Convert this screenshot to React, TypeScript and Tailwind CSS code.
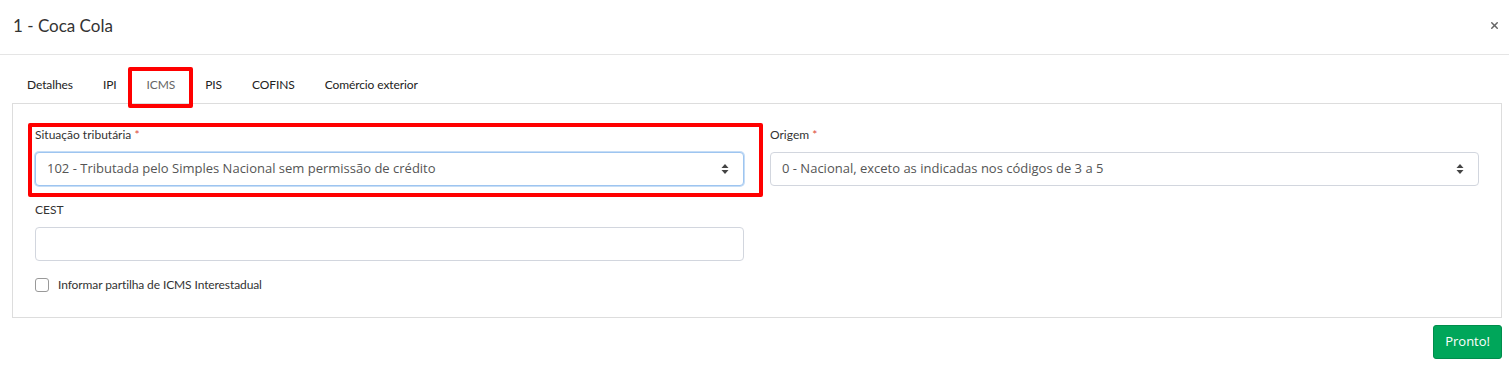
import { X } from 'lucide-react';

const tabs = ['Detalhes', 'IPI', 'ICMS', 'PIS', 'COFINS', 'Comércio exterior'];

function SelectArrows() {
  return (
    <svg width="8" height="12" viewBox="0 0 8 12" className="shrink-0">
      <path d="M4 1 L7.5 5 H0.5 Z" fill="#444" />
      <path d="M4 11 L7.5 7 H0.5 Z" fill="#444" />
    </svg>
  );
}

function FakeSelect({ value, focused }: { value: string; focused?: boolean }) {
  return (
    <div
      className={
        'h-[34px] rounded-[4px] border bg-white flex items-center justify-between pl-[11px] pr-[14px] text-[13px] text-[#555] ' +
        (focused ? 'border-[#9ec5f0] shadow-[0_0_0_1px_#c6ddf6]' : 'border-[#d2d6de]')
      }
      style={{ fontFamily: '"Open Sans", sans-serif' }}
    >
      <span>{value}</span>
      <SelectArrows />
    </div>
  );
}

export default function App() {
  return (
    <div className="w-[1509px] h-[366px] bg-white text-[#333] relative overflow-hidden" style={{ fontFamily: 'Lato, "Noto Sans", sans-serif' }}>
      {/* header */}
      <div className="h-[55px] border-b border-[#e5e5e5] flex items-center justify-between pl-[13px] pr-[9px]">
        <h4 className="text-[17px] leading-none pb-[4px]">1 - Coca Cola</h4>
        <X className="w-[11px] h-[11px] text-[#666] mb-[4px]" strokeWidth={3.2} />
      </div>

      <div className="pl-[12px] pr-[7px] pt-[12px]">
        {/* tabs */}
        <div className="flex h-[36px] relative">
          {tabs.map((t) => (
            <div
              key={t}
              className={'px-[15px] flex items-center text-[12px] tracking-[-0.1px] relative ' + (t === 'ICMS' ? 'text-[#666]' : 'text-[#222]')}
            >
              {t}
              {t === 'ICMS' && (
                <div className="absolute -left-[4px] -right-[3px] top-0 bottom-[-5px] border-[4px] border-[#f00] rounded-[2px]" />
              )}
            </div>
          ))}
        </div>

        {/* panel */}
        <div className="border border-[#ddd] h-[215px] pl-[22px] pt-[22px]">
          <div className="grid grid-cols-[709px_709px] gap-x-[26px]">
            <div className="relative">
              <div className="absolute -left-[7px] -right-[19px] -top-[3px] h-[74px] border-[4px] border-[#f00] rounded-[2px] pointer-events-none" />
              <label className="block text-[12px] h-[18px] leading-[18px] mb-[8px]">
                Situação tributária <span className="text-[#dd4b39]">*</span>
              </label>
              <FakeSelect value="102 - Tributada pelo Simples Nacional sem permissão de crédito" focused />
            </div>
            <div>
              <label className="block text-[12px] h-[18px] leading-[18px] mb-[8px]">
                Origem <span className="text-[#dd4b39]">*</span>
              </label>
              <FakeSelect value="0 - Nacional, exceto as indicadas nos códigos de 3 a 5" />
            </div>
            <div className="mt-[15px]">
              <label className="block text-[12px] h-[18px] leading-[18px] mb-[8px]">CEST</label>
              <div className="h-[34px] rounded-[4px] border border-[#d2d6de] bg-white" />
              <label className="flex items-center gap-[9px] mt-[15px] text-[12px] tracking-[-0.1px]">
                <span className="w-[14px] h-[14px] rounded-[3px] border border-[#999] bg-white" />
                Informar partilha de ICMS Interestadual
              </label>
            </div>
          </div>
        </div>

        {/* footer */}
        <div className="flex justify-end pt-[7px]">
          <button className="h-[34px] px-[11px] rounded-[3px] bg-[#00a65a] border border-[#008d4c] text-white text-[13px]" style={{ fontFamily: '"Open Sans", sans-serif' }}>
            Pronto!
          </button>
        </div>
      </div>
    </div>
  );
}
